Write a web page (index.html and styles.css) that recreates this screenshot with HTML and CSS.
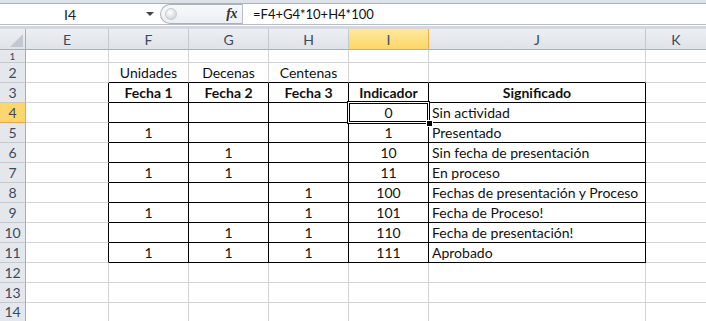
FILE: index.html
```html
<!DOCTYPE html>
<html>
<head>
<meta charset="utf-8">
<link rel="stylesheet" href="styles.css">
</head>
<body>
<div class="app">
  <div class="topstrip"></div>
  <div class="fbar">
    <div class="namebox"><span class="ref">I4</span><span class="caret"></span></div>
    <div class="fxbtn"><span class="knob"></span><span class="fx">fx</span></div>
    <div class="formula">=F4+G4*10+H4*100</div>
  </div>
  <div class="fgap"></div>
  <div class="sheet">
    <div class="hd corner"><span class="tri"></span></div>
    <div class="hd">E</div><div class="hd">F</div><div class="hd">G</div><div class="hd">H</div><div class="hd sel">I</div><div class="hd">J</div><div class="hd">K</div>

    <div class="rh r1">1</div><div class="c"></div><div class="c"></div><div class="c"></div><div class="c"></div><div class="c"></div><div class="c"></div><div class="c"></div>

    <div class="rh">2</div><div class="c"></div><div class="c top">Unidades</div><div class="c top">Decenas</div><div class="c top">Centenas</div><div class="c top"></div><div class="c top"></div><div class="c"></div>

    <div class="rh">3</div><div class="c lft"></div><div class="c t b">Fecha 1</div><div class="c t b">Fecha 2</div><div class="c t b">Fecha 3</div><div class="c t b">Indicador</div><div class="c t b">Significado</div><div class="c"></div>

    <div class="rh sel">4</div><div class="c lft"></div><div class="c t"></div><div class="c t"></div><div class="c t"></div><div class="c t">0</div><div class="c t txt">Sin actividad</div><div class="c"></div>

    <div class="rh">5</div><div class="c lft"></div><div class="c t">1</div><div class="c t"></div><div class="c t"></div><div class="c t">1</div><div class="c t txt">Presentado</div><div class="c"></div>

    <div class="rh">6</div><div class="c lft"></div><div class="c t"></div><div class="c t">1</div><div class="c t"></div><div class="c t">10</div><div class="c t txt">Sin fecha de presentación</div><div class="c"></div>

    <div class="rh">7</div><div class="c lft"></div><div class="c t">1</div><div class="c t">1</div><div class="c t"></div><div class="c t">11</div><div class="c t txt">En proceso</div><div class="c"></div>

    <div class="rh">8</div><div class="c lft"></div><div class="c t"></div><div class="c t"></div><div class="c t">1</div><div class="c t">100</div><div class="c t txt">Fechas de presentación y Proceso</div><div class="c"></div>

    <div class="rh">9</div><div class="c lft"></div><div class="c t">1</div><div class="c t"></div><div class="c t">1</div><div class="c t">101</div><div class="c t txt">Fecha de Proceso!</div><div class="c"></div>

    <div class="rh">10</div><div class="c lft"></div><div class="c t"></div><div class="c t">1</div><div class="c t">1</div><div class="c t">110</div><div class="c t txt">Fecha de presentación!</div><div class="c"></div>

    <div class="rh">11</div><div class="c lft"></div><div class="c t">1</div><div class="c t">1</div><div class="c t">1</div><div class="c t">111</div><div class="c t txt">Aprobado</div><div class="c"></div>

    <div class="rh">12</div><div class="c"></div><div class="c"></div><div class="c"></div><div class="c"></div><div class="c"></div><div class="c"></div><div class="c"></div>
    <div class="rh">13</div><div class="c"></div><div class="c"></div><div class="c"></div><div class="c"></div><div class="c"></div><div class="c"></div><div class="c"></div>
    <div class="rh">14</div><div class="c"></div><div class="c"></div><div class="c"></div><div class="c"></div><div class="c"></div><div class="c"></div><div class="c"></div>

    <div class="selbox"><span class="handle"></span></div>
  </div>
</div>
</body>
</html>
```
FILE: styles.css
```css
html, body {
  margin: 0;
  padding: 0;
  background: #fff;
  overflow: hidden;
  width: 706px;
  height: 321px;
}
.app {
  font-family: Lato, "Open Sans", sans-serif;
  color: #111;
  width: 706px;
}
.topstrip {
  height: 3px;
  background: #dde2e8;
  border-bottom: 1px solid #aab3bd;
}
.fbar {
  display: flex;
  height: 20px;
  background: #fff;
  border-bottom: 1px solid #b7bec7;
}
.namebox {
  width: 160px;
  display: flex;
  align-items: center;
  position: relative;
  font-size: 14px;
}
.namebox .ref {
  flex: 1;
  text-align: center;
  padding-right: 6px;
  color: #222;
}
.caret {
  width: 0;
  height: 0;
  border-left: 4px solid transparent;
  border-right: 4px solid transparent;
  border-top: 4px solid #444;
  margin-right: 6px;
}
.fxbtn {
  width: 83px;
  box-sizing: border-box;
  background: linear-gradient(#f7f8fa, #eceff3);
  border: 1px solid #a9b2bc;
  border-right: 1px solid #b7bec7;
  border-radius: 10px 0 0 10px;
  display: flex;
  align-items: center;
  justify-content: space-between;
  padding: 0 5px 0 4px;
}
.knob {
  width: 10px;
  height: 10px;
  border-radius: 50%;
  background: radial-gradient(circle at 40% 35%, #fff, #c3c9d1);
  border: 1px solid #c6ccd3;
}
.fx {
  font-family: "Liberation Serif", serif;
  font-style: italic;
  font-weight: bold;
  font-size: 14px;
  color: #333;
  letter-spacing: -0.5px;
}
.formula {
  flex: 1;
  padding-left: 10px;
  font-size: 13px;
  display: flex;
  align-items: center;
  color: #111;
}
.fgap {
  height: 3px;
  background: #d3d8de;
  border-top: 1px solid #fff;
}
.sheet {
  position: relative;
  display: grid;
  grid-template-columns: 26px 83px 80px 80px 80px 80px 217px 61px;
  grid-template-rows: 21px 13px repeat(12, 20px);
  font-size: 14px;
}
.sheet > div {
  box-sizing: border-box;
}
.hd {
  background: linear-gradient(#eceff3, #dfe3e8);
  border-right: 1px solid #c4c9d0;
  border-bottom: 1px solid #a5aeb9;
  display: flex;
  align-items: center;
  justify-content: center;
  color: #3b4a5e;
  font-size: 14px;
  padding-top: 1px;
}
.hd.corner {
  position: relative;
  border-right: 1px solid #a5aeb9;
}
.tri {
  position: absolute;
  right: 2px;
  bottom: 2px;
  width: 0;
  height: 0;
  border-left: 13px solid transparent;
  border-bottom: 13px solid #c2c8d0;
}
.hd.sel {
  background: linear-gradient(#fde99f, #fcd666);
  border-bottom: 1px solid #f0a637;
  border-right: 1px solid #f0b14a;
  color: #3b4a5e;
}
.rh {
  background: #e4e8ed;
  border-right: 1px solid #a5aeb9;
  border-bottom: 1px solid #c4c9d0;
  display: flex;
  align-items: flex-end;
  justify-content: center;
  color: #3b4a5e;
  font-size: 14px;
  line-height: 18px;
  overflow: hidden;
}
.rh.r1 {
  align-items: center;
  font-size: 10px;
  line-height: 12px;
}
.rh.sel {
  background: #fdd76b;
  border-bottom: 1px solid #f0a637;
  border-right: 1px solid #f0a637;
}
.c {
  border-right: 1px solid #d4d4d4;
  border-bottom: 1px solid #d4d4d4;
  display: flex;
  align-items: flex-end;
  justify-content: center;
  line-height: 18px;
  white-space: nowrap;
  overflow: hidden;
}
.c.top {
  border-bottom-color: #000;
}
.c.lft {
  border-right-color: #000;
}
.c.t {
  border-right-color: #000;
  border-bottom-color: #000;
}
.c.b {
  font-weight: bold;
}
.c.txt {
  justify-content: flex-start;
  padding-left: 3px;
}
.selbox {
  position: absolute;
  left: 347px;
  top: 72px;
  width: 83px;
  height: 23px;
  border: 1px solid #000;
  box-shadow: inset 0 0 0 1px #fff, inset 0 0 0 2px #000;
  box-sizing: border-box;
}
.handle {
  position: absolute;
  right: -4px;
  bottom: -4px;
  width: 5px;
  height: 5px;
  background: #000;
  border: 1px solid #fff;
}
```
